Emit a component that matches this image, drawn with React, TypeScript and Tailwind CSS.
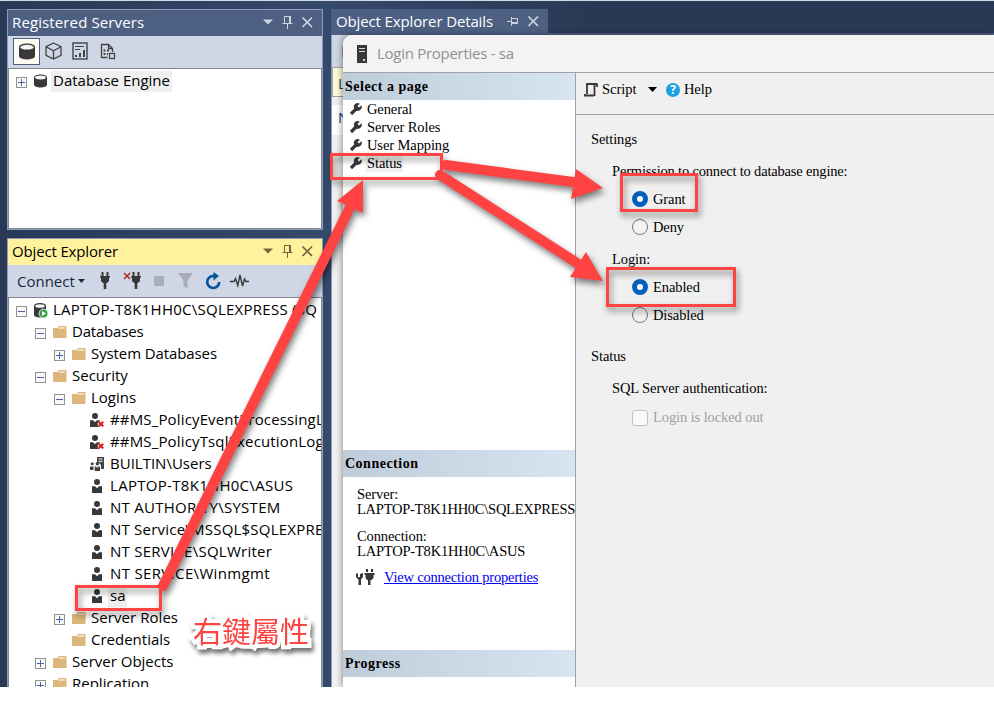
import type { ReactNode } from "react";

type IconKind = "db" | "server" | "folder" | "user" | "userOff" | "group";

interface Node {
  label: string;
  level: 0 | 1 | 2 | 3;
  icon: IconKind;
  state?: "open" | "closed";
  selected?: boolean;
  spacing?: string;
}

const nodes: Node[] = [
  { label: "LAPTOP-T8K1HH0C\\SQLEXPRESS (SQ", level: 0, icon: "server", state: "open", spacing: "tracking-[0.26px]" },
  { label: "Databases", level: 1, icon: "folder", state: "open", spacing: "tracking-[-0.2px]" },
  { label: "System Databases", level: 2, icon: "folder", state: "closed", spacing: "tracking-[-0.1px]" },
  { label: "Security", level: 1, icon: "folder", state: "open" },
  { label: "Logins", level: 2, icon: "folder", state: "open" },
  { label: "##MS_PolicyEventProcessingL", level: 3, icon: "userOff", spacing: "tracking-[0.15px]" },
  { label: "##MS_PolicyTsqlExecutionLog", level: 3, icon: "userOff", spacing: "tracking-[0.15px]" },
  { label: "BUILTIN\\Users", level: 3, icon: "group" },
  { label: "LAPTOP-T8K1HH0C\\ASUS", level: 3, icon: "user", spacing: "tracking-[0.3px]" },
  { label: "NT AUTHORITY\\SYSTEM", level: 3, icon: "user", spacing: "tracking-[0.27px]" },
  { label: "NT Service\\MSSQL$SQLEXPRE", level: 3, icon: "user", spacing: "tracking-[0.22px]" },
  { label: "NT SERVICE\\SQLWriter", level: 3, icon: "user", spacing: "tracking-[0.25px]" },
  { label: "NT SERVICE\\Winmgmt", level: 3, icon: "user", spacing: "tracking-[0.34px]" },
  { label: "sa", level: 3, icon: "user", selected: true },
  { label: "Server Roles", level: 2, icon: "folder", state: "closed", spacing: "tracking-[0.06px]" },
  { label: "Credentials", level: 2, icon: "folder" },
  { label: "Server Objects", level: 1, icon: "folder", state: "closed" },
  { label: "Replication", level: 1, icon: "folder", state: "closed" },
];

const indent = ["pl-[7px]", "pl-[26px]", "pl-[45px]", "pl-[64px]"];

function Cylinder({ className = "size-4" }: { className?: string }) {
  return (
    <svg viewBox="0 0 16 16" className={className}>
      <path d="M0 3.4C0 1.4 3.6 0 8 0s8 1.4 8 3.4v9.2c0 2-3.6 3.4-8 3.4s-8-1.4-8-3.4z" fill="#383838" />
      <ellipse cx="8" cy="3.7" rx="6.6" ry="2.4" fill="#f4f4f4" />
    </svg>
  );
}

function NodeIcon({ kind }: { kind: IconKind }) {
  if (kind === "db") return <Cylinder className="h-[14px] w-[13px] shrink-0" />;
  if (kind === "server")
    return (
      <svg viewBox="0 0 14 15" className="h-[15px] w-[14px] shrink-0 overflow-visible">
        <path d="M0 3C0 1 2.500 0 6 0s6 1 6 3v9c0 1.500-2.500 2.500-6 2.500S0 13.500 0 12z" fill="#383838" />
        <ellipse cx="6" cy="3" rx="4.800" ry="1.800" fill="#f4f4f4" />
        <circle cx="9.500" cy="10.500" r="4.500" fill="#37a044" stroke="#fff" strokeWidth=".8" />
        <path d="M8 8l4 2.500L8 13z" fill="#fff" />
      </svg>
    );
  if (kind === "folder")
    return (
      <svg viewBox="0 0 14 12" className="mb-px h-3 w-[14px] shrink-0">
        <path d="M0 2h4.500L6 0h7.500v12H0z" fill="#dcb67a" />
        <path d="M6.200 1.500h6v1H5.500z" fill="#fff" />
      </svg>
    );
  if (kind === "group")
    return (
      <svg viewBox="0 0 14 14" className="-ml-px h-[14px] w-[14px] shrink-0" fill="#424242">
        <path d="M7 0h7v12h-3V8L9 6H7z" />
        <path d="M8.500 2h4M8.500 4.300h4" stroke="#fff" />
        <circle cx="2.200" cy="6.800" r="1.500" />
        <circle cx="7.300" cy="6.800" r="1.700" />
        <path d="M0 9.500h3.500V13H0zM4.700 9.500h1.300l1.200 1.200 1.200-1.200H10V14H4.700z" />
      </svg>
    );
  return (
    <svg viewBox="0 0 14 14" className="-ml-px h-[14px] w-[14px] shrink-0" fill="#383838">
      <circle cx={kind === "user" ? 7 : 5} cy="3" r="3" />
      {kind === "user" ? (
        <path d="M2 7.300h3l2 2 2-2h3V14H2z" />
      ) : (
        <>
          <path d="M0 7.300h3l2 2 2-2h3V14H0z" />
          <path d="M8.600 8.800l4.600 4.600M13.200 8.800l-4.600 4.600" stroke="#fff" strokeWidth="3.500" />
          <path d="M8.600 8.800l4.600 4.600M13.200 8.800l-4.600 4.600" stroke="#e01b1b" strokeWidth="2" />
        </>
      )}
    </svg>
  );
}

function Expander({ state }: { state?: "open" | "closed" }) {
  if (!state) return <span className="w-[11px] shrink-0" />;
  return (
    <svg viewBox="0 0 11 11" className="mt-[3px] size-[11px] shrink-0" shapeRendering="crispEdges">
      <rect x=".5" y=".5" width="10" height="10" fill="#f8f8f8" stroke="#919191" />
      <path d={state === "open" ? "M2 5.500h7" : "M2 5.500h7M5.500 2v7"} stroke="#4b63a7" />
    </svg>
  );
}

function TreeRow({ node }: { node: Node }) {
  return (
    <div className={`flex h-[22px] shrink-0 items-center whitespace-nowrap text-[15px] text-black ${indent[node.level]}`}>
      <Expander state={node.state} />
      <span className="ml-[7px] flex w-[15px] shrink-0">
        <NodeIcon kind={node.icon} />
      </span>
      <span className={`ml-[2px] h-[21px] px-[2px] leading-[18px] ${node.spacing ?? "tracking-normal"} ${node.selected ? "bg-[#efefef]" : ""}`}>
        {node.label}
      </span>
    </div>
  );
}

function PanelTitle({ title, active }: { title: string; active?: boolean }) {
  return (
    <div className={`flex h-[26px] shrink-0 items-center pb-[2px] pl-1 text-[15px] ${active ? "bg-[#fff29d] text-black" : "bg-[#4d6082] text-white"}`}>
      <span className={`flex-1 leading-5 ${active ? "tracking-[-0.15px]" : "tracking-[0.12px]"}`}>{title}</span>
      <svg width="50" height="16" className={`mr-[9px] ${active ? "text-[#75633d]" : "text-[#ced4dd]"}`} fill="none" stroke="currentColor">
        <path d="M0 5.500h10l-5 5z" fill="currentColor" stroke="none" />
        <path d="M21.500 2v7M27.500 2v7M21 2.500h7M26.500 2v7M19.500 9.500h10M24.500 9v6" />
        <path d="M39.500 3.500l9.500 9.500M49 3.500L39.500 13" strokeWidth="1.700" />
      </svg>
    </div>
  );
}

function Plug({ className }: { className?: string }) {
  return (
    <svg viewBox="0 0 10 17" className={`h-[17px] w-[10px] shrink-0 ${className ?? ""}`} fill="#383838">
      <path d="M1.500 0h2v4h-2zM6.500 0h2v4h-2zM0 4h10v1.500H9V9L7 11H6.300v6H3.700v-6H3L1 9V5.500H0z" />
    </svg>
  );
}

function RegisteredServers() {
  return (
    <section className="flex h-[221px] shrink-0 flex-col border border-[#8e9bbc] bg-white">
      <PanelTitle title="Registered Servers" />
      <div className="flex h-8 shrink-0 items-center bg-[#cfd6e5] pb-[2px] pl-[5px]">
        <span className="flex size-[27px] items-center justify-center border border-[#4d6082] bg-[#fffcf4]">
          <Cylinder className="h-[17px] w-4" />
        </span>
        <svg width="17" height="18" className="ml-[5px]" fill="none" stroke="#424242" strokeWidth="1.300">
          <path d="M8.500 1l7.500 3.700v8.600L8.500 17 1 13.300V4.700zM1 4.700l7.500 4 7.500-4M8.500 8.700V17" />
        </svg>
        <svg width="16" height="18" className="ml-[10px]" fill="none" stroke="#424242">
          <rect x="1" y="1" width="14" height="16" strokeWidth="1.400" />
          <path d="M3 4.500h9M3 7.500h5" />
          <path d="M4 13v2M8 11v4M12 8v7" strokeWidth="2" />
        </svg>
        <svg width="16" height="18" className="ml-3" fill="none" stroke="#424242">
          <path d="M7.500 15.500H1.500v-13h7l4 4V10M8.500 2.500v4h4" strokeWidth="1.300" />
          <path d="M3.500 8.500h2M7 8.500h2M3.500 12h2M7 12h1" strokeWidth="2" />
          <rect x="9.500" y="11.500" width="5" height="5" strokeWidth="1.300" />
        </svg>
      </div>
      <div className="flex-1 border border-[#828790] pt-px">
        <TreeRow node={{ label: "Database Engine", level: 0, icon: "db", state: "closed", selected: true }} />
      </div>
    </section>
  );
}

function ObjectExplorer() {
  return (
    <section className="mt-2 flex min-h-0 flex-1 flex-col border border-b-0 border-[#8e9bbc] bg-white">
      <PanelTitle title="Object Explorer" active />
      <div className="flex h-8 shrink-0 items-center bg-[#cfd6e5] pb-px pl-[9px] text-[15px] text-[#1b293e]">
        <span className="w-[57px] leading-5">Connect</span>
        <svg width="7" height="4" className="ml-1"><path d="M0 0h7L3.500 4z" fill="#1b293e" /></svg>
        <Plug className="ml-[15px]" />
        <svg width="8" height="8" className="mb-[10px] ml-[13px]"><path d="M1 1l6 6M7 1L1 7" stroke="#b22a16" strokeWidth="1.500" /></svg>
        <Plug />
        <span className="ml-[13px] size-[10px] bg-[#a9adb8]" />
        <svg width="15" height="16" className="ml-[14px]"><path d="M0 0h15L9.500 7.500V16L5.500 13V7.500z" fill="#a9adb8" /></svg>
        <svg width="17" height="18" className="ml-3" fill="none" stroke="#00539c" strokeWidth="2.600">
          <path d="M10 4H8a6 6 0 1 0 6.200 6" />
          <path d="M8.500 0l5.500 4-5.500 4.500z" fill="#00539c" stroke="none" />
        </svg>
        <svg width="19" height="14" className="ml-2" fill="none" stroke="#383838" strokeWidth="1.400">
          <path d="M0 7.500h4l1.500-3 2.300 7L10 1l2.500 11 2-7 1.500 2.500h3" />
        </svg>
      </div>
      <div className="flex min-h-0 flex-1 flex-col overflow-hidden border border-b-0 border-[#828790] pt-px">
        {nodes.map((n) => <TreeRow key={n.label} node={n} />)}
      </div>
    </section>
  );
}

function Heading({ children }: { children: ReactNode }) {
  return (
    <h3 className="flex h-[27px] shrink-0 items-center bg-linear-to-r from-[#bfccda] to-[#d7e4f2] pl-[2px] text-[14px] font-bold tracking-[0.5px]">
      {children}
    </h3>
  );
}

function PageItem({ label, selected }: { label: string; selected?: boolean }) {
  return (
    <li className="flex h-[18px] items-center pl-[6px]">
      <svg width="13" height="13" viewBox="0 0 13 13" className="mr-[4px]">
        <path d="M2 11L7.500 5.500" stroke="#383838" strokeWidth="3.200" />
        <path d="M10.800.7L8.500 3l1.500 1.500 2.400-2.200A3.900 3.900 0 1 1 7.300.3 3.900 3.900 0 0 1 10.800.7z" fill="#383838" />
      </svg>
      <span className={`px-px leading-[17px] ${selected ? "bg-[#efefef]" : ""}`}>{label}</span>
    </li>
  );
}

function Radio({ label, checked }: { label: string; checked?: boolean }) {
  return (
    <label className="flex h-7 items-center pl-[41px]">
      <span className={`mr-[5px] mb-[3px] size-4 rounded-full ${checked ? "border-[5px] border-[#005fb8] bg-white" : "border border-[#767676] bg-[#f3f3f3]"}`} />
      {label}
    </label>
  );
}

function LoginProperties() {
  return (
    <div className="absolute top-[34px] right-0 bottom-0 left-[343px] flex flex-col overflow-hidden rounded-tl-[9px] bg-[#f0f0f0] font-['Liberation_Serif',serif] text-[14.5px] tracking-[-0.1px] text-black shadow-[-1px_0_6px_rgba(0,0,0,0.4)]">
      <header className="flex h-[38px] shrink-0 items-center border-b border-[#a0a0a5] bg-[#f3f3f3] pl-[14px] font-['Open_Sans','Noto_Sans',sans-serif] text-[15px] tracking-[-0.28px] text-[#919191]">
        <svg width="10" height="18" className="mr-[10px]">
          <path d="M0 0h10v18H0z" fill="#383838" />
          <path d="M2 3.500h6M2 6.500h6" stroke="#ddd" />
          <path d="M6 14h2v2H6z" fill="#ddd" />
        </svg>
        Login Properties - sa
      </header>
      <div className="flex min-h-0 flex-1">
        <aside className="flex w-[232px] shrink-0 flex-col overflow-hidden bg-white">
          <Heading>Select a page</Heading>
          <ul className="h-[350px] shrink-0">
            <PageItem label="General" />
            <PageItem label="Server Roles" />
            <PageItem label="User Mapping" />
            <PageItem label="Status" selected />
          </ul>
          <Heading>Connection</Heading>
          <div className="h-[173px] shrink-0 pt-[10px] pl-[14px] leading-[15px] whitespace-nowrap">
            <p>Server:</p>
            <p className="tracking-[-0.25px]">LAPTOP-T8K1HH0C\SQLEXPRESS</p>
            <p className="mt-3">Connection:</p>
            <p className="tracking-[-0.2px]">LAPTOP-T8K1HH0C\ASUS</p>
            <p className="mt-[10px] flex items-center">
              <svg width="19" height="16" className="-ml-px mr-[9px]" fill="#383838">
                <path d="M0 4l2 1v3h2V5l3-1v4L5 10.500V16H2.500v-5.500L0 8zM10 0h2v3h-2zM15 0h2v3h-2zM8.500 4h10v2h-1v3l-2 2h-1v5H12v-5h-1L9.500 9V6h-1z" />
              </svg>
              <a className="tracking-[-0.2px] text-[#0000f0] underline">View connection properties</a>
            </p>
          </div>
          <Heading>Progress</Heading>
        </aside>
        <main className="flex-1 border-l border-[#a0a0a5]">
          <div className="flex h-[42px] items-center border-b border-[#a0a0a5] pb-[8px] pl-2">
            <svg width="14" height="14" className="mr-1" fill="none" stroke="#383838" strokeWidth="1.800">
              <path d="M3 11V1h10.500M10.500 1v12M0 12.500h10" />
              <path d="M13 1v3M1 11v2" />
            </svg>
            <span className="w-[35px] tracking-normal">Script</span>
            <svg width="9" height="5" className="ml-[11px]"><path d="M0 0h9L4.500 5z" /></svg>
            <span className="mr-1 ml-[9px] flex size-[14px] items-center justify-center rounded-full bg-[#1ba1e2] font-['Open_Sans',sans-serif] text-[12px] leading-none font-bold text-white">?</span>
            Help
          </div>
          <div className="pt-[11px] pl-[15px]">
            <h4 className="flex h-7 items-center">Settings</h4>
            <p className="mt-1 flex h-7 items-center pl-[21px] tracking-[-0.18px]">Permission to connect to database engine:</p>
            <Radio label="Grant" checked />
            <Radio label="Deny" />
            <p className="mt-1 flex h-7 items-center pl-[21px]">Login:</p>
            <Radio label="Enabled" checked />
            <Radio label="Disabled" />
            <h4 className="mt-[13px] flex h-7 items-center">Status</h4>
            <p className="mt-1 flex h-7 items-center pl-[21px]">SQL Server authentication:</p>
            <label className="mt-px flex h-7 items-center pl-[41px] text-[#a0a0a0]">
              <span className="mr-[5px] mb-px size-4 rounded-[3px] border border-[#c3c3c3] bg-[#f9f9f9]" />
              Login is locked out
            </label>
          </div>
        </main>
      </div>
    </div>
  );
}

function DetailsTab() {
  return (
    <div className="ml-2 flex flex-1 flex-col pt-2">
      <div className="flex h-[24px] w-[217px] items-center bg-[#4d6082] pl-[5px] text-[15px] text-white">
        <span className="w-[171px] tracking-[-0.13px] whitespace-nowrap">Object Explorer Details</span>
        <svg width="32" height="14" fill="none" stroke="#ced4dd">
          <path d="M0 7.500h4M4.500 3v9M4 4.500h6.500v5H4M4 8.500h6" />
          <path d="M21.500 2.500l9.500 9.500M31 2.500L21.500 12" strokeWidth="1.700" />
        </svg>
      </div>
      <div className="h-[2px] bg-[#4d6082]" />
      <div className="flex-1 border-l border-[#8e9bbc] bg-[#f0f0f0] text-[15px]">
        <div className="h-8 bg-[#cfd6e5] pt-[5px] pl-[9px] text-[#5d6b85]">B</div>
        <div className="h-[30px] border border-[#a0a0a5] bg-[#fcfadb] pt-1 pl-[5px] text-[#1e395b]">L</div>
        <div className="mt-[8px] h-[30px] bg-white pt-px pl-[6px] text-[#0b3c7c]">N</div>
      </div>
    </div>
  );
}

function Annotations() {
  return (
    <div className="pointer-events-none absolute inset-0">
      <svg width="994" height="727" className="absolute inset-0 drop-shadow-[2px_4px_3px_rgba(0,0,0,0.5)]">
        <g fill="none" stroke="#ff4343" strokeWidth="3">
          <path d="M76.500 586.500h84v23h-84zM331.500 154.500h110v24h-110zM621.500 174.500h75v36h-75zM607.500 268.500h127v37h-127z" />
        </g>
        <g stroke="#ff4343" strokeWidth="10" strokeLinecap="round">
          <path d="M163 586L350 207M446 165l127 17M440 175l137 88" />
        </g>
        <g fill="#ff4343">
          <path d="M363 180l-26 21 26 12zM603 188l-27-19-5 30zM603 281l-17-29-16 25z" />
        </g>
      </svg>
      <span className="absolute top-[610px] left-[193px] font-['Noto_Sans_CJK_TC',sans-serif] text-[29px] leading-[40px] whitespace-nowrap text-[#ff4343] drop-shadow-[2px_4px_2px_rgba(0,0,0,0.55)] [-webkit-text-stroke:8px_white] [paint-order:stroke_fill]">
        右鍵屬性
      </span>
    </div>
  );
}

export default function App() {
  return (
    <div className="relative h-[727px] w-[994px] overflow-hidden bg-white font-['Open_Sans','Noto_Sans',sans-serif]">
      <div className="relative flex h-[687px] overflow-hidden border-t border-[#d3dbea] bg-linear-to-r from-[#293955] via-[#35496a] via-33% to-[#293955] to-60%">
        <div className="flex w-[323px] shrink-0 flex-col pt-2 pl-[7px]">
          <RegisteredServers />
          <ObjectExplorer />
        </div>
        <DetailsTab />
        <LoginProperties />
      </div>
      <Annotations />
    </div>
  );
}
